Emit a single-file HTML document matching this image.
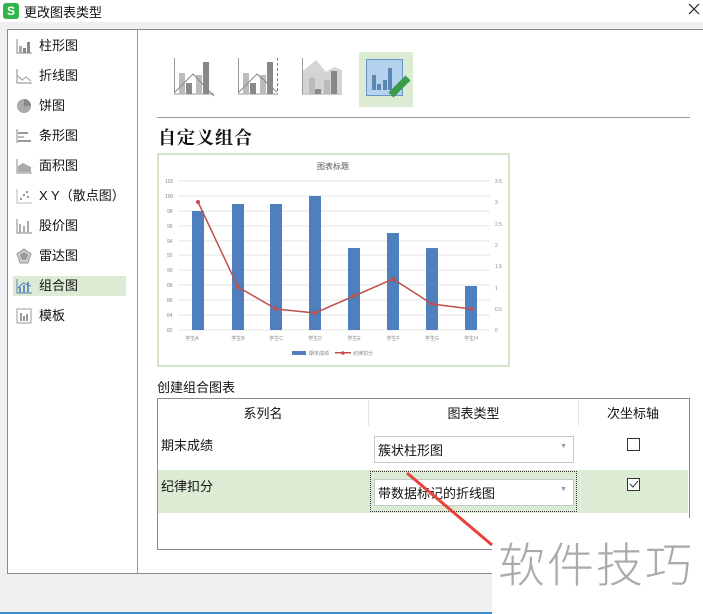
<!DOCTYPE html>
<html><head><meta charset="utf-8"><style>
*{margin:0;padding:0;box-sizing:border-box}
body{width:703px;height:614px;background:#f0f0f0;position:relative;overflow:hidden;font-family:"Liberation Sans","Noto Sans CJK SC",sans-serif;font-size:13px;color:#111}
.a{position:absolute}
.item{position:absolute;left:13px;width:113px;height:20px;line-height:20px;padding-left:26px;font-size:13px}
.item svg{position:absolute;left:3px;top:2px}
</style></head><body>
<div class="a" style="left:0;top:0;width:703px;height:22px;background:#fff"></div>
<div class="a" style="left:3px;top:3px;width:16px;height:16px;background:#2fb54b;border-radius:3px;color:#fff;font-size:12px;line-height:16px;text-align:center;font-weight:bold">S</div>
<div class="a" style="left:24px;top:2px;font-size:13px">更改图表类型</div>
<svg class="a" style="left:688px;top:3px" width="12" height="12"><path d="M1 1L11 11M11 1L1 11" stroke="#222" stroke-width="1.2"/></svg>

<div class="a" style="left:7px;top:29px;width:697px;height:545px;background:#fff;border:1px solid #8a8a8a"></div>
<div class="a" style="left:137px;top:30px;width:1px;height:543px;background:#999"></div>

<div class="item" style="top:36px">柱形图<svg width="16" height="16"><path d="M1 1V15H16" stroke="#888" fill="none"/><rect x="3" y="8" width="3" height="7" fill="#aaa"/><rect x="7" y="10" width="3" height="5" fill="#888"/><rect x="11" y="4" width="3" height="11" fill="#888"/></svg></div>
<div class="item" style="top:66px">折线图<svg width="16" height="16"><path d="M1 1V15H16" stroke="#888" fill="none"/><path d="M2 8L6 12L10 9L15 13" stroke="#999" fill="none"/></svg></div>
<div class="item" style="top:96px">饼图<svg width="16" height="16"><circle cx="8" cy="8" r="7" fill="#aaa"/><path d="M8 8V1A7 7 0 0 1 15 8Z" fill="#888"/></svg></div>
<div class="item" style="top:126px">条形图<svg width="16" height="16"><path d="M1 1V15" stroke="#888"/><rect x="2" y="4" width="10" height="2" fill="#999"/><rect x="2" y="8" width="6" height="2" fill="#bbb"/><rect x="2" y="12" width="13" height="2" fill="#999"/></svg></div>
<div class="item" style="top:156px">面积图<svg width="16" height="16"><path d="M1 1V15H16" stroke="#888" fill="none"/><path d="M2 14V8L7 5L15 9V14Z" fill="#aaa"/></svg></div>
<div class="item" style="top:186px">X Y（散点图）<svg width="16" height="16"><path d="M1 1V15H16" stroke="#bbb" fill="none"/><g fill="#999"><rect x="4" y="10" width="2" height="2"/><rect x="7" y="6" width="2" height="2"/><rect x="11" y="8" width="2" height="2"/><rect x="10" y="3" width="2" height="2"/></g></svg></div>
<div class="item" style="top:216px">股价图<svg width="16" height="16"><path d="M1 1V15H16" stroke="#888" fill="none"/><g fill="#aaa"><rect x="3" y="6" width="2" height="9"/><rect x="7" y="8" width="2" height="7"/><rect x="11" y="3" width="2" height="12"/></g></svg></div>
<div class="item" style="top:246px">雷达图<svg width="16" height="16"><path d="M8 1L15 6L12 15H4L1 6Z" fill="#ccc" stroke="#999"/><path d="M8 4L12 7L10 12H6L4 7Z" fill="#999"/></svg></div>
<div class="item" style="top:276px;background:#dcebd4">组合图<svg width="16" height="16"><path d="M1 1V15H16" stroke="#5a86b5" fill="none"/><g fill="#6a93c3"><rect x="3" y="9" width="2" height="6"/><rect x="7" y="7" width="2" height="8"/><rect x="11" y="4" width="2" height="11"/></g><path d="M2 10L7 5L15 8" stroke="#5a86b5" fill="none"/></svg></div>
<div class="item" style="top:306px">模板<svg width="16" height="16"><rect x="1" y="1" width="14" height="14" fill="none" stroke="#999"/><rect x="4" y="5" width="2" height="8" fill="#999"/><rect x="7" y="8" width="2" height="5" fill="#999"/><rect x="10" y="6" width="2" height="7" fill="#999"/></svg></div>

<svg class="a" style="left:170px;top:50px" width="250" height="60">
<g transform="translate(4,8)"><path d="M0.5 0V36H40" stroke="#999" fill="none"/><rect x="5" y="15" width="6" height="21" fill="#bbb"/><rect x="12" y="25" width="6" height="11" fill="#888"/><rect x="22" y="17" width="6" height="19" fill="#bbb"/><rect x="29" y="4" width="6" height="32" fill="#888"/><path d="M1 34L19 16L40 38" stroke="#888" fill="none"/></g>
<g transform="translate(68,8)"><path d="M0.5 0V36H40" stroke="#999" fill="none"/><path d="M39.5 0V36" stroke="#888" stroke-dasharray="3,2"/><rect x="5" y="15" width="6" height="21" fill="#bbb"/><rect x="12" y="25" width="6" height="11" fill="#888"/><rect x="22" y="17" width="6" height="19" fill="#bbb"/><rect x="29" y="4" width="6" height="32" fill="#888"/><path d="M1 34L19 16L39 34" stroke="#888" fill="none"/></g>
<g transform="translate(132,8)"><path d="M0.5 0V36H40" stroke="#999" fill="none"/><path d="M1 36V13L14 2L24 14L32 9L40 12V36Z" fill="#d4d4d4"/><rect x="7" y="20" width="6" height="16" fill="#bbb"/><rect x="13" y="31" width="6" height="5" fill="#888"/><rect x="22" y="22" width="6" height="14" fill="#bbb"/><rect x="29" y="13" width="6" height="23" fill="#888"/></g>
<rect x="189" y="2" width="54" height="55" fill="#dcebd4"/>
<rect x="196.5" y="9.5" width="36" height="36" fill="#b4d1ee" stroke="#6a93c3"/>
<g fill="#5a86b5"><rect x="202" y="25" width="4" height="15"/><rect x="207" y="34" width="4" height="6"/><rect x="213" y="30" width="4" height="10"/><rect x="218" y="18" width="4" height="22"/></g>
<path d="M221 45L238 28" stroke="#3a9a4a" stroke-width="7"/>
</svg>
<div class="a" style="left:157px;top:117px;width:533px;height:1px;background:#999"></div>
<div class="a" style="left:158px;top:124px;font-size:18px;font-weight:bold;font-family:'Noto Serif CJK SC',serif;letter-spacing:1px">自定义组合</div>

<svg class="a" style="left:157px;top:153px" width="353" height="214" font-family="Liberation Sans,Noto Sans CJK SC,sans-serif">
<rect x="0.5" y="0.5" width="352" height="213" fill="#fff" stroke="#d4e4c8" stroke-width="3"/>
<text x="176" y="16" font-size="8" fill="#555" text-anchor="middle">图表标题</text>
<g stroke="#ddd" stroke-width="0.7">
<line x1="21" x2="333" y1="28" y2="28"/><line x1="21" x2="333" y1="43" y2="43"/><line x1="21" x2="333" y1="58" y2="58"/><line x1="21" x2="333" y1="73" y2="73"/><line x1="21" x2="333" y1="88" y2="88"/><line x1="21" x2="333" y1="102" y2="102"/><line x1="21" x2="333" y1="117" y2="117"/><line x1="21" x2="333" y1="132" y2="132"/><line x1="21" x2="333" y1="147" y2="147"/><line x1="21" x2="333" y1="162" y2="162"/><line x1="21" x2="333" y1="177" y2="177"/></g>
<g font-size="5" fill="#888">
<text x="8" y="30">102</text><text x="8" y="45">100</text><text x="10" y="60">98</text><text x="10" y="75">96</text><text x="10" y="90">94</text><text x="10" y="104">92</text><text x="10" y="119">90</text><text x="10" y="134">88</text><text x="10" y="149">86</text><text x="10" y="164">84</text><text x="10" y="179">82</text>
<text x="338" y="30">3.5</text><text x="338" y="51">3</text><text x="338" y="73">2.5</text><text x="338" y="94">2</text><text x="338" y="115">1.5</text><text x="338" y="137">1</text><text x="338" y="158">0.5</text><text x="338" y="179">0</text>
<text x="35" y="187" text-anchor="middle">学生A</text><text x="81" y="187" text-anchor="middle">学生B</text><text x="119" y="187" text-anchor="middle">学生C</text><text x="158" y="187" text-anchor="middle">学生D</text><text x="197" y="187" text-anchor="middle">学生E</text><text x="236" y="187" text-anchor="middle">学生F</text><text x="275" y="187" text-anchor="middle">学生G</text><text x="314" y="187" text-anchor="middle">学生H</text>
<text x="152" y="202">期末成绩</text><text x="196" y="202">纪律扣分</text>
</g>
<g fill="#4f7fbd">
<rect x="35" y="58" width="12" height="119"/><rect x="75" y="51" width="12" height="126"/><rect x="113" y="51" width="12" height="126"/><rect x="152" y="43" width="12" height="134"/><rect x="191" y="95" width="12" height="82"/><rect x="230" y="80" width="12" height="97"/><rect x="269" y="95" width="12" height="82"/><rect x="308" y="133" width="12" height="44"/>
<rect x="135" y="198" width="14" height="4"/></g>
<polyline points="41,49 81,134 119,156 158,160 197,143 236,126 275,151 314,156" fill="none" stroke="#c0504d" stroke-width="1.5"/>
<g fill="#c0504d"><circle cx="41" cy="49" r="2"/><circle cx="81" cy="134" r="2"/><circle cx="119" cy="156" r="2"/><circle cx="158" cy="160" r="2"/><circle cx="197" cy="143" r="2"/><circle cx="236" cy="126" r="2"/><circle cx="275" cy="151" r="2"/><circle cx="314" cy="156" r="2"/>
<rect x="178" y="199" width="16" height="1.5"/><circle cx="186" cy="200" r="1.8"/></g>
</svg>

<div class="a" style="left:157px;top:377px;font-size:13px">创建组合图表</div>
<div class="a" style="left:157px;top:398px;width:533px;height:152px;border:1px solid #8a8a8a;background:#fff"></div>
<div class="a" style="left:368px;top:400px;width:1px;height:26px;background:#e4e4e4"></div>
<div class="a" style="left:578px;top:400px;width:1px;height:26px;background:#e4e4e4"></div>
<div class="a" style="left:158px;top:403px;width:210px;text-align:center">系列名</div>
<div class="a" style="left:369px;top:403px;width:209px;text-align:center">图表类型</div>
<div class="a" style="left:579px;top:403px;width:108px;text-align:center">次坐标轴</div>
<div class="a" style="left:161px;top:435px">期末成绩</div>
<div class="a" style="left:374px;top:436px;width:200px;height:27px;border:1px solid #c8c8c8;background:#fff;padding:3px 0 0 3px">簇状柱形图<span class="a" style="right:6px;top:6px;font-size:7px;color:#999">▼</span></div>
<div class="a" style="left:627px;top:438px;width:13px;height:13px;border:1px solid #333"></div>
<div class="a" style="left:158px;top:470px;width:530px;height:43px;background:#dcebd4"></div>
<div class="a" style="left:161px;top:476px">纪律扣分</div>
<div class="a" style="left:370px;top:471px;width:207px;height:41px;border:1px dotted #333"></div>
<div class="a" style="left:374px;top:479px;width:200px;height:27px;border:1px solid #c8c8c8;background:#fff;padding:3px 0 0 3px">带数据标记的折线图<span class="a" style="right:6px;top:6px;font-size:7px;color:#999">▼</span></div>
<div class="a" style="left:627px;top:478px;width:13px;height:13px;border:1px solid #333;background:#fff"><svg width="11" height="11" style="position:absolute;left:0;top:0"><path d="M2 5L5 8L10 2" stroke="#333" fill="none"/></svg></div>

<div class="a" style="left:0;top:612px;width:703px;height:2px;background:#3b8dd0"></div>
<div class="a" style="left:492px;top:518px;width:211px;height:96px;background:#fff"></div>
<div class="a" style="left:498px;top:532px;font-size:47px;color:#aaa;letter-spacing:2px;font-family:'Noto Sans CJK SC',sans-serif;line-height:60px;font-weight:300">软件技巧</div>
<svg class="a" style="left:400px;top:465px" width="100" height="90"><path d="M7 8L92 80" stroke="#e8403a" stroke-width="3"/></svg>
</body></html>
